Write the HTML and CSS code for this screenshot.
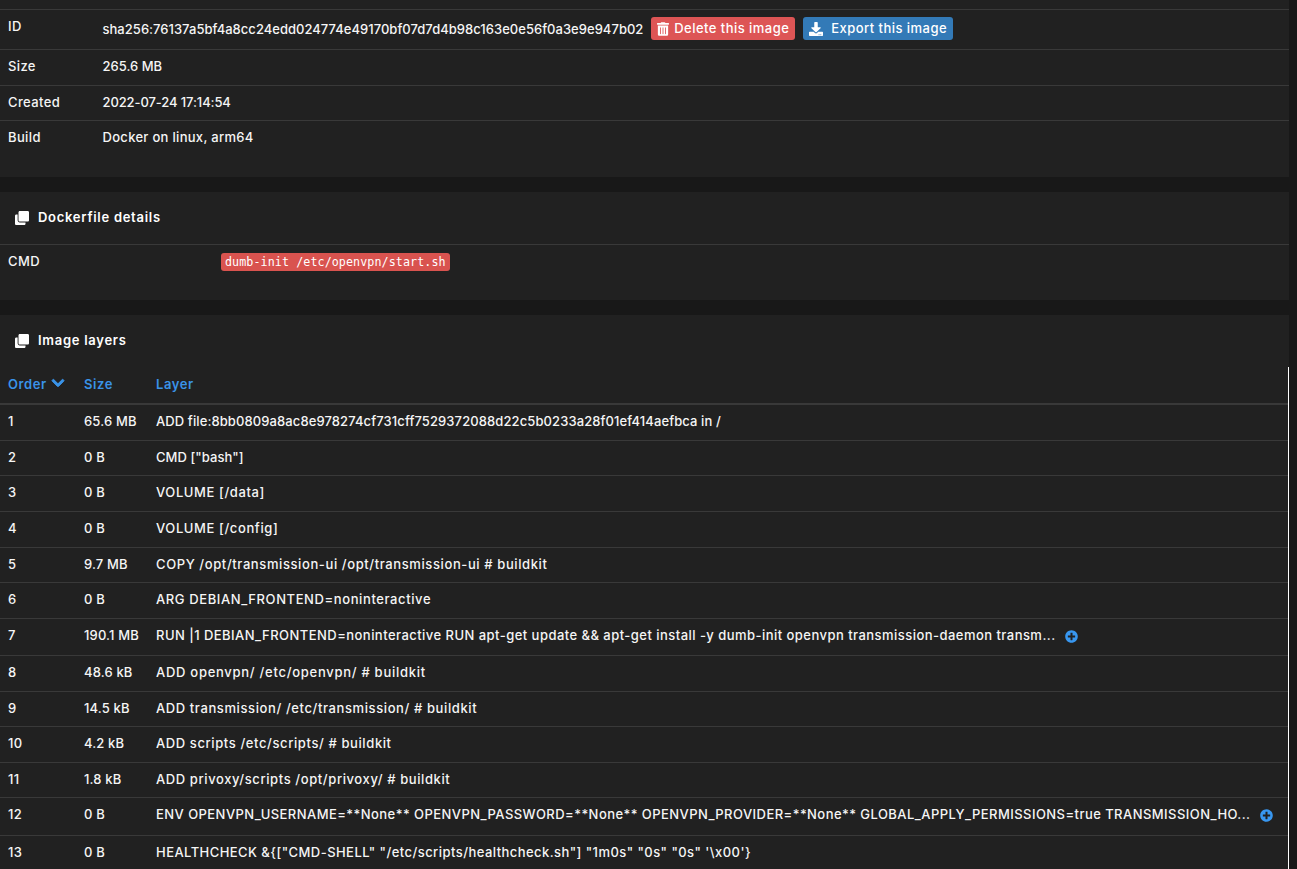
FILE: index.html
```html
<!DOCTYPE html>
<html lang="en">
<head>
<meta charset="utf-8">
<title>Image details</title>
<link rel="stylesheet" href="styles.css">
</head>
<body>
<div class="page">
  <section class="panel panel-first">
    <table class="table table-info">
      <tbody>
        <tr>
          <td class="cell-label">ID</td>
          <td>
            <span class="hash">sha256:76137a5bf4a8cc24edd024774e49170bf07d7d4b98c163e0e56f0a3e9e947b02</span>
            <button class="btn btn-danger"><svg class="icon" viewBox="0 0 448 512"><path fill="currentColor" d="M32 464a48 48 0 0 0 48 48h288a48 48 0 0 0 48-48V128H32zm272-256a16 16 0 0 1 32 0v224a16 16 0 0 1-32 0zm-96 0a16 16 0 0 1 32 0v224a16 16 0 0 1-32 0zm-96 0a16 16 0 0 1 32 0v224a16 16 0 0 1-32 0zM432 32H312l-9.4-18.7A24 24 0 0 0 281.1 0H166.8a23.72 23.72 0 0 0-21.4 13.3L136 32H16A16 16 0 0 0 0 48v32a16 16 0 0 0 16 16h416a16 16 0 0 0 16-16V48a16 16 0 0 0-16-16z"/></svg>Delete this image</button>
            <button class="btn btn-primary"><svg class="icon icon-wide" viewBox="0 0 512 512"><path fill="currentColor" d="M216 0h80c13.3 0 24 10.7 24 24v168h87.7c17.8 0 26.7 21.5 14.1 34.1L269.7 378.3c-7.5 7.5-19.8 7.5-27.3 0L90.1 226.1c-12.6-12.6-3.7-34.1 14.1-34.1H192V24c0-13.3 10.7-24 24-24zm296 376v112c0 13.3-10.7 24-24 24H24c-13.3 0-24-10.7-24-24V376c0-13.3 10.7-24 24-24h146.7l49 49c20.1 20.1 52.5 20.1 72.6 0l49-49H488c13.3 0 24 10.7 24 24zm-124 88c0-11-9-20-20-20s-20 9-20 20 9 20 20 20 20-9 20-20zm64 0c0-11-9-20-20-20s-20 9-20 20 9 20 20 20 20-9 20-20z"/></svg>Export this image</button>
          </td>
        </tr>
        <tr><td class="cell-label">Size</td><td class="num">265.6 MB</td></tr>
        <tr><td class="cell-label">Created</td><td class="date">2022-07-24 17:14:54</td></tr>
        <tr><td class="cell-label">Build</td><td class="build">Docker on linux, arm64</td></tr>
      </tbody>
    </table>
  </section>

  <section class="panel panel-docker">
    <header class="panel-title">
      <svg class="icon-title" viewBox="0 0 512 512"><path fill="currentColor" d="M464 0c26.51 0 48 21.49 48 48v288c0 26.51-21.49 48-48 48H176c-26.51 0-48-21.49-48-48V48c0-26.51 21.49-48 48-48h288M176 416c-44.112 0-80-35.888-80-80V128H48c-26.51 0-48 21.49-48 48v288c0 26.51 21.49 48 48 48h288c26.51 0 48-21.49 48-48v-48H176z"/></svg>
      <span>Dockerfile details</span>
    </header>
    <table class="table table-docker">
      <tbody>
        <tr><td class="cell-cmd">CMD</td><td><code class="code">dumb-init /etc/openvpn/start.sh</code></td></tr>
      </tbody>
    </table>
  </section>

  <section class="panel panel-layers">
    <header class="panel-title panel-title-flat">
      <svg class="icon-title" viewBox="0 0 512 512"><path fill="currentColor" d="M464 0c26.51 0 48 21.49 48 48v288c0 26.51-21.49 48-48 48H176c-26.51 0-48-21.49-48-48V48c0-26.51 21.49-48 48-48h288M176 416c-44.112 0-80-35.888-80-80V128H48c-26.51 0-48 21.49-48 48v288c0 26.51 21.49 48 48 48h288c26.51 0 48-21.49 48-48v-48H176z"/></svg>
      <span>Image layers</span>
    </header>
    <div class="table-wrap">
      <table class="table table-layers">
        <thead>
          <tr>
            <th class="col-order">Order<svg class="icon-sort" viewBox="0 0 448 512"><path fill="currentColor" stroke="currentColor" stroke-width="36" d="M207.029 381.476L12.686 187.132c-9.373-9.373-9.373-24.569 0-33.941l22.667-22.667c9.357-9.357 24.522-9.375 33.901-.04L224 284.505l154.745-154.021c9.379-9.335 24.544-9.317 33.901.04l22.667 22.667c9.373 9.373 9.373 24.569 0 33.941L240.971 381.476c-9.373 9.372-24.569 9.372-33.942 0z"/></svg></th>
            <th class="col-size">Size</th>
            <th>Layer</th>
          </tr>
        </thead>
        <tbody>
          <tr><td>1</td><td class="cell-size">65.6 MB</td><td class="hashy">ADD file:8bb0809a8ac8e978274cf731cff7529372088d22c5b0233a28f01ef414aefbca in /</td></tr>
          <tr><td>2</td><td class="cell-size">0 B</td><td class="tight">CMD ["bash"]</td></tr>
          <tr><td>3</td><td class="cell-size">0 B</td><td class="wide">VOLUME [/data]</td></tr>
          <tr><td>4</td><td class="cell-size">0 B</td><td class="wide">VOLUME [/config]</td></tr>
          <tr><td>5</td><td class="cell-size">9.7 MB</td><td class="wide">COPY /opt/transmission-ui /opt/transmission-ui # buildkit</td></tr>
          <tr><td>6</td><td class="cell-size">0 B</td><td class="wide">ARG DEBIAN_FRONTEND=noninteractive</td></tr>
          <tr class="row-more"><td>7</td><td class="cell-size">190.1 MB</td><td class="long-run">RUN |1 DEBIAN_FRONTEND=noninteractive RUN apt-get update &amp;&amp; apt-get install -y dumb-init openvpn transmission-daemon transm... <svg class="icon-more" viewBox="0 0 512 512"><path fill="currentColor" d="M256 8C119 8 8 119 8 256s111 248 248 248 248-111 248-248S393 8 256 8zm144 276c0 6.6-5.4 12-12 12h-92v92c0 6.6-5.4 12-12 12h-56c-6.6 0-12-5.4-12-12v-92h-92c-6.6 0-12-5.4-12-12v-56c0-6.6 5.4-12 12-12h92v-92c0-6.6 5.4-12 12-12h56c6.6 0 12 5.4 12 12v92h92c6.6 0 12 5.4 12 12v56z"/></svg></td></tr>
          <tr><td>8</td><td class="cell-size">48.6 kB</td><td class="wider">ADD openvpn/ /etc/openvpn/ # buildkit</td></tr>
          <tr><td>9</td><td class="cell-size">14.5 kB</td><td class="wide">ADD transmission/ /etc/transmission/ # buildkit</td></tr>
          <tr><td>10</td><td class="cell-size">4.2 kB</td><td class="wide">ADD scripts /etc/scripts/ # buildkit</td></tr>
          <tr><td>11</td><td class="cell-size">1.8 kB</td><td class="wide">ADD privoxy/scripts /opt/privoxy/ # buildkit</td></tr>
          <tr class="row-more"><td>12</td><td class="cell-size">0 B</td><td class="long">ENV OPENVPN_USERNAME=**None** OPENVPN_PASSWORD=**None** OPENVPN_PROVIDER=**None** GLOBAL_APPLY_PERMISSIONS=true TRANSMISSION_HO... <svg class="icon-more" viewBox="0 0 512 512"><path fill="currentColor" d="M256 8C119 8 8 119 8 256s111 248 248 248 248-111 248-248S393 8 256 8zm144 276c0 6.6-5.4 12-12 12h-92v92c0 6.6-5.4 12-12 12h-56c-6.6 0-12-5.4-12-12v-92h-92c-6.6 0-12-5.4-12-12v-56c0-6.6 5.4-12 12-12h92v-92c0-6.6 5.4-12 12-12h56c6.6 0 12 5.4 12 12v92h92c6.6 0 12 5.4 12 12v56z"/></svg></td></tr>
          <tr><td>13</td><td class="cell-size">0 B</td><td class="long">HEALTHCHECK &amp;{["CMD-SHELL" "/etc/scripts/healthcheck.sh"] "1m0s" "0s" "0s" '\x00'}</td></tr>
        </tbody>
      </table>
    </div>
  </section>
</div>
</body>
</html>
```
FILE: styles.css
```css
html, body {
  margin: 0;
  height: 869px;
  overflow: hidden;
  background: #181818;
}
body {
  font-family: "Inter", "Noto Sans", sans-serif;
  font-size: 13px;
  font-weight: 500;
  line-height: 1.42857;
  color: #f5f5f5;
  letter-spacing: 0.38px;
}
.page {
  width: 1289px;
  display: flex;
  flex-direction: column;
  gap: 15px;
}
.panel {
  background: #212121;
}
.panel-first {
  padding: 9px 0 21px;
}
.panel-docker {
  padding-bottom: 20px;
}
.panel-title {
  display: flex;
  align-items: center;
  gap: 9px;
  height: 52px;
  padding-left: 15px;
  font-weight: 600;
  letter-spacing: 0.72px;
  color: #fff;
  box-sizing: border-box;
}
.panel-title-flat {
  height: 52px;
}
.icon-title {
  width: 14px;
  height: 14px;
}
.table {
  width: 100%;
  border-collapse: collapse;
  border-spacing: 0;
}
.table td, .table th {
  padding: 7px 8px 9px;
  text-align: left;
  vertical-align: top;
  border-top: 1px solid #393939;
}
.table-info td:first-child {
  width: 78.5px;
}
.hash {
  display: inline-block;
  vertical-align: middle;
  margin-top: 2px;
  letter-spacing: 0.025px;
}
.num {
  letter-spacing: 0;
}
.date {
  letter-spacing: -0.1px;
}
.build {
  letter-spacing: 0.3px;
}
.cell-size {
  letter-spacing: 0.15px;
  white-space: nowrap;
}
.hashy {
  letter-spacing: 0.1px;
}
.tight {
  letter-spacing: 0.05px;
}
.wide {
  letter-spacing: 0.6px;
}
.wider {
  letter-spacing: 0.72px;
}
.long {
  letter-spacing: 0.445px;
}
.long-run {
  letter-spacing: 0.46px;
}
.btn {
  display: inline-flex;
  align-items: center;
  height: 23px;
  padding: 0 5px;
  margin-left: 4px;
  vertical-align: middle;
  border: 1px solid transparent;
  border-radius: 3px;
  font: inherit;
  color: #fff;
  letter-spacing: 0.46px;
  box-sizing: border-box;
}
.btn-danger {
  background: #dd5555;
}
.btn-primary {
  background: #337ab7;
}
.icon {
  width: 12px;
  height: 14px;
  margin-right: 5px;
}
.icon-wide {
  width: 14px;
  margin-right: 8px;
}
.cell-cmd {
  width: 197px;
}
.code {
  display: inline-block;
  padding: 0 4px;
  background: #d9534f;
  border-radius: 3px;
  color: #fff;
  font-family: "DejaVu Sans Mono", "Liberation Mono", monospace;
  font-size: 11.7px;
  font-weight: 400;
  letter-spacing: 0.08px;
  line-height: 18px;
}
.table-wrap {
  border-right: 1px solid #fff;
}
.table-layers thead th {
  border-top: 0;
  border-bottom: 2px solid #393939;
  color: #3a93e8;
  font-weight: 600;
  letter-spacing: 0.6px;
  padding: 8px 8px 10px;
}
.table-layers tbody td {
  padding-bottom: 9.05px;
}
.table-layers tbody tr:first-child td {
  border-top: 0;
  padding: 7px 8px 9px;
}
.table-layers .row-more td {
  padding-bottom: 10.6px;
}
.col-order {
  width: 60px;
  white-space: nowrap;
}
.col-size {
  width: 56px;
}
.icon-sort {
  width: 14px;
  height: 14px;
  margin-left: 4px;
  vertical-align: -1px;
}
.icon-more {
  width: 13px;
  height: 13px;
  margin-left: 6px;
  color: #3897f0;
  vertical-align: -3px;
}
```
